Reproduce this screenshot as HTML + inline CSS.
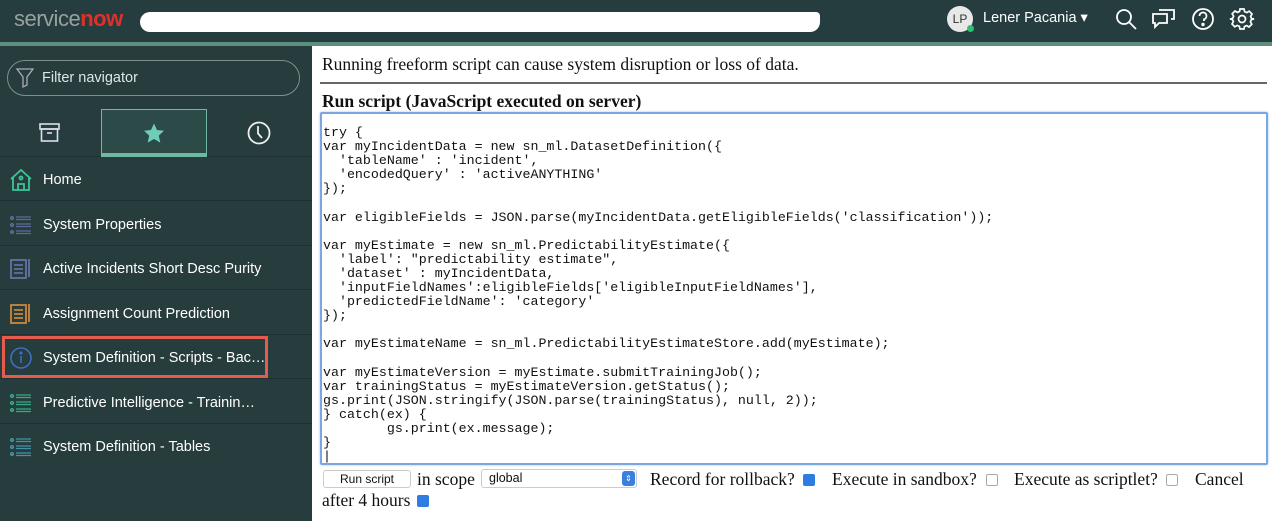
<!DOCTYPE html>
<html><head><meta charset="utf-8"><style>
*{margin:0;padding:0;box-sizing:border-box}
body{width:1272px;height:521px;overflow:hidden;background:#fff;position:relative;font-family:"Liberation Sans",sans-serif}
.hdr{position:absolute;left:0;top:0;width:1272px;height:42px;background:#253d3e}
.gl{position:absolute;left:0;top:42px;width:1272px;height:4px;background:#5d8f7e}
.side{position:absolute;left:0;top:46px;width:312px;height:475px;background:#263c3d}
.item{position:absolute;left:0;width:312px;height:44px;border-bottom:1px solid #1e3031;color:#fff;font-size:14.5px}
.item span{position:absolute;left:43px;top:15px;white-space:nowrap}
.item svg{position:absolute;left:9px;top:11px}
.serif{font-family:"Liberation Serif",serif;color:#111;font-size:17.5px;white-space:nowrap}
.cb{position:absolute;width:12px;height:12px;border-radius:2px}
.on{background:#2f7de1}.off{border:1px solid #aaa}
pre{position:absolute;left:323px;top:126px;font-family:"Liberation Mono",monospace;font-size:13.3px;line-height:14.1px;color:#111}
</style></head><body>
<div class="hdr"></div>
<div style="position:absolute;left:14px;top:6px;font-size:22px;color:#9aa0a0;letter-spacing:-0.5px">service<b style="color:#e0302a">now</b></div>
<div style="position:absolute;left:140px;top:12px;width:680px;height:20px;background:#fff;border-radius:10px 4px 10px 10px"></div>
<div style="position:absolute;left:947px;top:6px;width:26px;height:26px;border-radius:50%;background:#e8e8e8;color:#333;font-size:12px;text-align:center;line-height:26px">LP</div>
<div style="position:absolute;left:967px;top:25px;width:7px;height:7px;border-radius:50%;background:#2fbf71"></div>
<div style="position:absolute;left:983px;top:10px;color:#fff;font-size:14.5px">Lener Pacania ▾</div>
<svg style="position:absolute;left:1114px;top:7px" width="26" height="26" fill="none" stroke="#fff" stroke-width="1.8"><circle cx="10" cy="10" r="7"/><path d="M15 15l7 7"/></svg>
<svg style="position:absolute;left:1150px;top:6px" width="28" height="26" fill="none" stroke="#fff" stroke-width="1.8"><path d="M3 8h14v9H9l-4 4v-4H3z"/><path d="M9 4h15v9h-3"/></svg>
<svg style="position:absolute;left:1190px;top:6px" width="26" height="26" fill="none" stroke="#fff" stroke-width="1.8"><circle cx="13" cy="13" r="10"/><path d="M9.5 10a3.5 3.5 0 1 1 4.5 3.3V15"/><circle cx="13" cy="18.5" r="0.8" fill="#fff"/></svg>
<svg style="position:absolute;left:1229px;top:6px" width="26" height="26" fill="none" stroke="#fff" stroke-width="1.7"><circle cx="13" cy="13" r="3.5"/><path d="M11 3h4l.6 2.6 2.2 1 2.4-1.4 2.8 2.8-1.4 2.4 1 2.2L25 13v0l-2.6.6-1 2.2 1.4 2.4-2.8 2.8-2.4-1.4-2.2 1L15 23h-4l-.6-2.6-2.2-1-2.4 1.4-2.8-2.8 1.4-2.4-1-2.2L1 13l2.6-.6 1-2.2-1.4-2.4 2.8-2.8 2.4 1.4 2.2-1z"/></svg>
<div class="gl"></div>
<div class="side"></div>
<div style="position:absolute;left:7px;top:60px;width:293px;height:36px;border:1px solid #7f8e8e;border-radius:18px"></div>
<svg style="position:absolute;left:15px;top:67px" width="20" height="22" fill="none" stroke="#aab" stroke-width="1.3"><path d="M2 2h16l-6 8v8l-4 2V10z"/></svg>
<div style="position:absolute;left:42px;top:70px;color:#dfe5e5;font-size:14.5px">Filter navigator</div>
<div style="position:absolute;left:0;top:156px;width:312px;height:1px;background:#1e3031"></div>
<div style="position:absolute;left:101px;top:109px;width:106px;height:48px;border:1px solid #6fb8a5;border-bottom:4px solid #6fb8a5;background:#2b4a48"></div>
<svg style="position:absolute;left:38px;top:122px" width="24" height="22" fill="none" stroke="#dde" stroke-width="1.6"><rect x="2" y="2" width="19" height="5"/><rect x="3.5" y="7" width="16" height="12"/><path d="M9 11h5"/></svg>
<svg style="position:absolute;left:142px;top:122px" width="24" height="22"><path d="M12 1.5l3 6.5 7 .8-5.2 4.8 1.5 7L12 17l-6.3 3.6 1.5-7L2 8.8l7-.8z" fill="#6fcdb5"/></svg>
<svg style="position:absolute;left:246px;top:120px" width="26" height="26" fill="none" stroke="#eee" stroke-width="1.8"><circle cx="13" cy="13" r="10.5"/><path d="M12 6v7.5l4 4.5"/></svg>
<div class="item" style="top:157px"><svg width="24" height="24" fill="none" stroke="#3cc49a" stroke-width="1.8"><path d="M2 11L12 2l10 9M4 9.5V22h16V9.5M9 22v-6h6v6"/><circle cx="12" cy="10" r="1.5"/></svg><span>Home</span></div>
<div class="item" style="top:202px"><svg width="24" height="24" fill="none" stroke="#6b78b0" stroke-width="1.2"><circle cx="3" cy="5" r="1.3"/><circle cx="3" cy="12" r="1.3"/><circle cx="3" cy="19" r="1.3"/><path d="M7 4h15M7 6.5h15M7 11h15M7 13.5h15M7 18h15M7 20.5h15" opacity=".8"/></svg><span>System Properties</span></div>
<div class="item" style="top:246px"><svg width="24" height="24" fill="none" stroke="#6b78b0" stroke-width="1.6"><rect x="2" y="3" width="15" height="18"/><path d="M5 8h9M5 12h9M5 16h9M20 2v18"/></svg><span>Active Incidents Short Desc Purity</span></div>
<div class="item" style="top:291px"><svg width="24" height="24" fill="none" stroke="#e0913a" stroke-width="1.6"><rect x="2" y="3" width="15" height="18"/><path d="M5 8h9M5 12h9M5 16h9M20 2v18"/></svg><span>Assignment Count Prediction</span></div>
<div class="item" style="top:335px"><svg width="24" height="24" fill="none" stroke="#3d6fc0" stroke-width="1.6"><circle cx="12" cy="12" r="10"/><path d="M12 10v7"/><circle cx="12" cy="7" r="0.8" fill="#3d6fc0"/></svg><span>System Definition - Scripts - Bac…</span></div>
<div style="position:absolute;left:2px;top:336px;width:266px;height:42px;border:3px solid #e55b4d"></div>
<div class="item" style="top:380px"><svg width="24" height="24" fill="none" stroke="#3cc49a" stroke-width="1.2"><circle cx="3" cy="5" r="1.3"/><circle cx="3" cy="12" r="1.3"/><circle cx="3" cy="19" r="1.3"/><path d="M7 4h15M7 6.5h15M7 11h15M7 13.5h15M7 18h15M7 20.5h15" opacity=".8"/></svg><span>Predictive Intelligence - Trainin…</span></div>
<div class="item" style="top:424px;border-bottom:none"><svg width="24" height="24" fill="none" stroke="#4aa9c0" stroke-width="1.2"><circle cx="3" cy="5" r="1.3"/><circle cx="3" cy="12" r="1.3"/><circle cx="3" cy="19" r="1.3"/><path d="M7 4h15M7 6.5h15M7 11h15M7 13.5h15M7 18h15M7 20.5h15" opacity=".8"/></svg><span>System Definition - Tables</span></div>

<div class="serif" style="position:absolute;left:322px;top:54px">Running freeform script can cause system disruption or loss of data.</div>
<div style="position:absolute;left:320px;top:82px;width:947px;height:2px;background:#666"></div>
<div class="serif" style="position:absolute;left:322px;top:91px;font-weight:bold">Run script (JavaScript executed on server)</div>
<div style="position:absolute;left:320px;top:112px;width:948px;height:353px;border:2px solid #7aa7e0;border-radius:2px;box-shadow:0 0 2px #9bc0ef"></div>
<pre>try {
var myIncidentData = new sn_ml.DatasetDefinition({
  'tableName' : 'incident',
  'encodedQuery' : 'activeANYTHING'
});

var eligibleFields = JSON.parse(myIncidentData.getEligibleFields('classification'));

var myEstimate = new sn_ml.PredictabilityEstimate({
  'label': "predictability estimate",
  'dataset' : myIncidentData,
  'inputFieldNames':eligibleFields['eligibleInputFieldNames'],
  'predictedFieldName': 'category'
});

var myEstimateName = sn_ml.PredictabilityEstimateStore.add(myEstimate);

var myEstimateVersion = myEstimate.submitTrainingJob();
var trainingStatus = myEstimateVersion.getStatus();
gs.print(JSON.stringify(JSON.parse(trainingStatus), null, 2));
} catch(ex) {
        gs.print(ex.message);
}
|</pre>
<div style="position:absolute;left:323px;top:470px;width:88px;height:18px;border:1px solid #ccc;border-radius:3px;font-size:12px;text-align:center;line-height:16px;color:#111;background:#fff">Run script</div>
<div class="serif" style="position:absolute;left:417px;top:469px">in scope</div>
<div style="position:absolute;left:481px;top:469px;width:156px;height:19px;border:1px solid #ccc;border-radius:3px;font-size:12.5px;line-height:17px;padding-left:7px;color:#111">global</div>
<div style="position:absolute;left:622px;top:471px;width:13px;height:15px;background:#3b7fe0;border-radius:3px;color:#fff;font-size:8px;text-align:center;line-height:15px">⇕</div>
<div class="serif" style="position:absolute;left:650px;top:469px">Record for rollback?</div>
<div class="cb on" style="left:803px;top:474px"></div>
<div class="serif" style="position:absolute;left:832px;top:469px">Execute in sandbox?</div>
<div class="cb off" style="left:986px;top:474px"></div>
<div class="serif" style="position:absolute;left:1014px;top:469px">Execute as scriptlet?</div>
<div class="cb off" style="left:1166px;top:474px"></div>
<div class="serif" style="position:absolute;left:1195px;top:469px">Cancel</div>
<div class="serif" style="position:absolute;left:322px;top:490px">after 4 hours</div>
<div class="cb on" style="left:417px;top:495px"></div>
</body></html>
